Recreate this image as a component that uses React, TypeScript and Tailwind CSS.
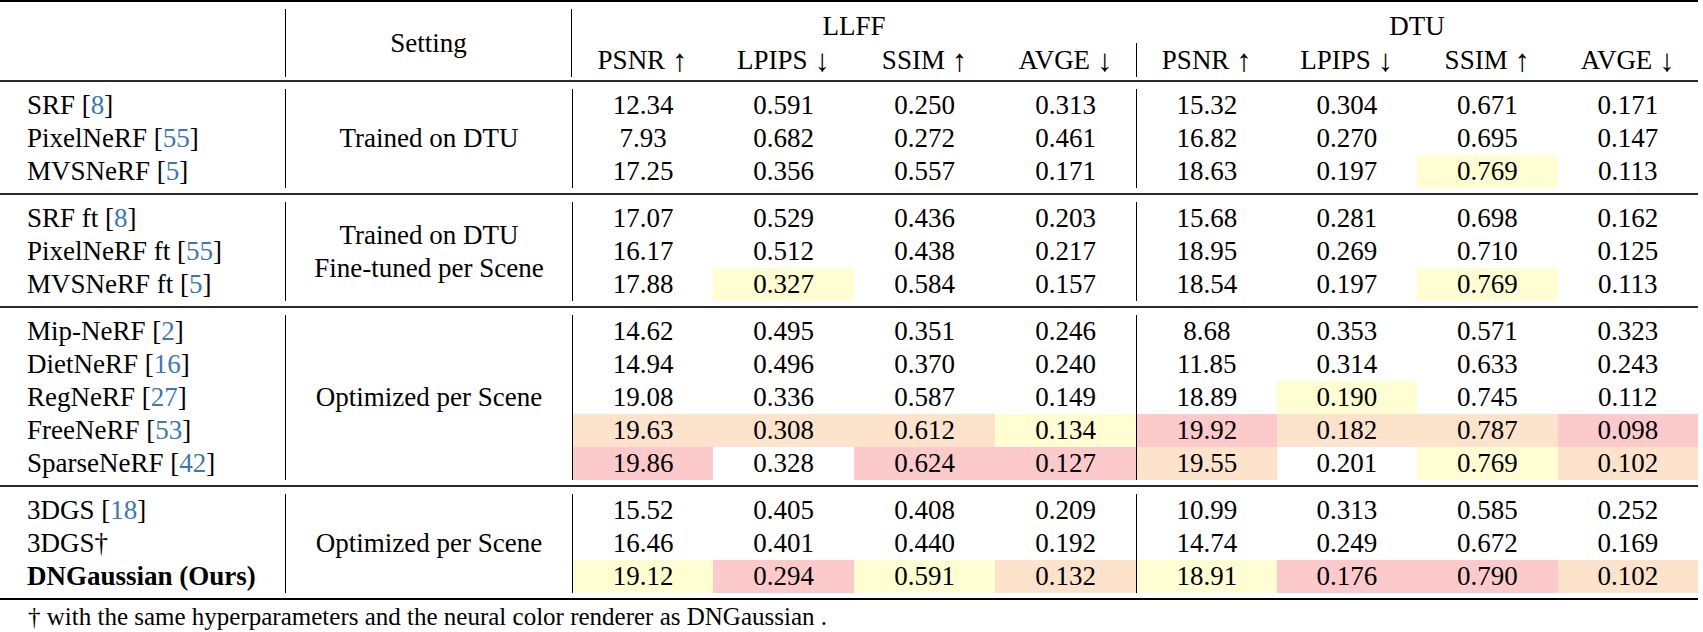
import React from "react";

type Row = { name: string; cite?: string; bold?: boolean; v: string[]; h: string };
type Group = { setting: string[]; rows: Row[] };

const groups: Group[] = [
  {
    setting: ["Trained on DTU"],
    rows: [
      { name: "SRF", cite: "8", v: ["12.34", "0.591", "0.250", "0.313", "15.32", "0.304", "0.671", "0.171"], h: "........" },
      { name: "PixelNeRF", cite: "55", v: ["7.93", "0.682", "0.272", "0.461", "16.82", "0.270", "0.695", "0.147"], h: "........" },
      { name: "MVSNeRF", cite: "5", v: ["17.25", "0.356", "0.557", "0.171", "18.63", "0.197", "0.769", "0.113"], h: "......y." },
    ],
  },
  {
    setting: ["Trained on DTU", "Fine-tuned per Scene"],
    rows: [
      { name: "SRF ft", cite: "8", v: ["17.07", "0.529", "0.436", "0.203", "15.68", "0.281", "0.698", "0.162"], h: "........" },
      { name: "PixelNeRF ft", cite: "55", v: ["16.17", "0.512", "0.438", "0.217", "18.95", "0.269", "0.710", "0.125"], h: "........" },
      { name: "MVSNeRF ft", cite: "5", v: ["17.88", "0.327", "0.584", "0.157", "18.54", "0.197", "0.769", "0.113"], h: ".y....y." },
    ],
  },
  {
    setting: ["Optimized per Scene"],
    rows: [
      { name: "Mip-NeRF", cite: "2", v: ["14.62", "0.495", "0.351", "0.246", "8.68", "0.353", "0.571", "0.323"], h: "........" },
      { name: "DietNeRF", cite: "16", v: ["14.94", "0.496", "0.370", "0.240", "11.85", "0.314", "0.633", "0.243"], h: "........" },
      { name: "RegNeRF", cite: "27", v: ["19.08", "0.336", "0.587", "0.149", "18.89", "0.190", "0.745", "0.112"], h: ".....y.." },
      { name: "FreeNeRF", cite: "53", v: ["19.63", "0.308", "0.612", "0.134", "19.92", "0.182", "0.787", "0.098"], h: "oooyroor" },
      { name: "SparseNeRF", cite: "42", v: ["19.86", "0.328", "0.624", "0.127", "19.55", "0.201", "0.769", "0.102"], h: "r.rro.yo" },
    ],
  },
  {
    setting: ["Optimized per Scene"],
    rows: [
      { name: "3DGS", cite: "18", v: ["15.52", "0.405", "0.408", "0.209", "10.99", "0.313", "0.585", "0.252"], h: "........" },
      { name: "3DGS\u2020", v: ["16.46", "0.401", "0.440", "0.192", "14.74", "0.249", "0.672", "0.169"], h: "........" },
      { name: "DNGaussian (Ours)", bold: true, v: ["19.12", "0.294", "0.591", "0.132", "18.91", "0.176", "0.790", "0.102"], h: "yryoyrro" },
    ],
  },
];

const bgFor = (c: string) =>
  c === "r" ? "bg-[#fccaca]" : c === "o" ? "bg-[#fde3cc]" : c === "y" ? "bg-[#fefed2]" : "";

const cols =
  "grid grid-cols-[285px_287px_141px_141px_141px_141px_140.5px_140.5px_140.5px_140.5px]";

const metrics: [string, string][] = [
  ["PSNR", "\u2191"],
  ["LPIPS", "\u2193"],
  ["SSIM", "\u2191"],
  ["AVGE", "\u2193"],
];

function MidRule() {
  return <div className="h-[2px] w-[1698px] bg-[#2a2a2a]" />;
}

function GroupBlock({ g }: { g: Group }) {
  const n = g.rows.length;
  const rowsClass =
    n === 5 ? "grid-rows-[repeat(5,33px)]" : "grid-rows-[repeat(3,33px)]";
  const spanClass = n === 5 ? "row-span-5" : "row-span-3";
  return (
    <div className="pt-[7px] pb-[5px]">
      <div className={`${cols} ${rowsClass}`}>
        {g.rows.map((r, i) => (
          <React.Fragment key={i}>
            <div
              className={`col-start-1 flex items-center pl-[27px] whitespace-nowrap ${
                r.bold ? "font-bold" : ""
              }`}
              style={{ gridRowStart: i + 1 }}
            >
              {r.name}
              {r.cite && (
                <>
                  &nbsp;[<span className="text-[#3b78b6]">{r.cite}</span>]
                </>
              )}
            </div>
            {i === 0 && (
              <div
                className={`col-start-2 row-start-1 ${spanClass} border-l border-black flex flex-col items-center justify-center leading-[33px]`}
              >
                {g.setting.map((s) => (
                  <div key={s}>{s}</div>
                ))}
              </div>
            )}
            {r.v.map((val, j) => (
              <div
                key={j}
                className={`flex items-center justify-center ${bgFor(r.h[j])} ${
                  j === 0 || j === 4 ? "border-l border-black" : ""
                }`}
                style={{ gridRowStart: i + 1, gridColumnStart: j + 3 }}
              >
                {val}
              </div>
            ))}
          </React.Fragment>
        ))}
      </div>
    </div>
  );
}

export default function App() {
  return (
    <div className="w-[1703px] h-[632px] bg-white text-black font-['Liberation_Serif',serif] text-[27px] leading-[33px] overflow-hidden">
      <div className="h-[2px] w-[1698px] bg-black" />
      <div className="pt-[7px] pb-[3px]">
        <div className={`${cols} grid-rows-[34px_34px]`}>
          <div className="col-start-1 row-start-1 row-span-2" />
          <div className="col-start-2 row-start-1 row-span-2 border-l border-r border-black flex items-center justify-center">
            Setting
          </div>
          <div className="col-start-3 col-span-4 row-start-1 flex items-center justify-center">
            LLFF
          </div>
          <div className="col-start-7 col-span-4 row-start-1 flex items-center justify-center">
            DTU
          </div>
          {[...metrics, ...metrics].map((m, j) => (
            <div
              key={j}
              className={`row-start-2 flex items-center justify-center whitespace-nowrap ${
                j === 4 ? "border-l border-black" : ""
              }`}
              style={{ gridColumnStart: j + 3 }}
            >
              {m[0]}&nbsp;
              <span className="text-[31px] leading-[33px] text-black">{m[1]}</span>
            </div>
          ))}
        </div>
      </div>
      <MidRule />
      {groups.map((g, i) => (
        <React.Fragment key={i}>
          <GroupBlock g={g} />
          {i < groups.length - 1 ? (
            <MidRule />
          ) : (
            <div className="h-[2px] w-[1698px] bg-black" />
          )}
        </React.Fragment>
      ))}
      <div className="pl-[28px] pt-[2px] text-[25px] leading-[30px] whitespace-nowrap">
        {"\u2020 with the same hyperparameters and the neural color renderer as DNGaussian ."}
      </div>
    </div>
  );
}
